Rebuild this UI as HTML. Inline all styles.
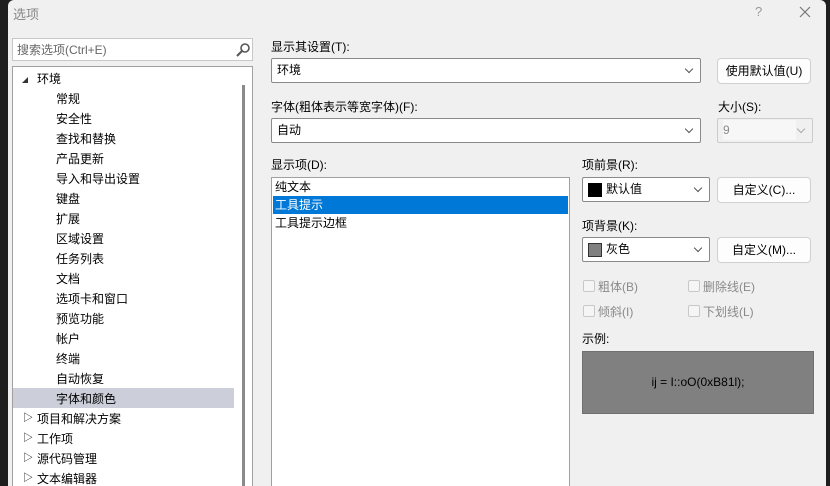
<!DOCTYPE html>
<html style="overflow:hidden;width:830px;height:486px"><head><meta charset="utf-8"><style>
*{box-sizing:border-box;margin:0;padding:0}
body{width:830px;height:486px;overflow:hidden;background:#1e1e1e;font-family:"Liberation Sans","Noto Sans CJK SC",sans-serif;font-size:12px;color:#000;position:relative}
.dlg{position:absolute;left:8px;top:0;width:818px;height:486px;background:#f0f0f0;border-radius:6px 6px 0 0}
.a{position:absolute;white-space:nowrap}
.box{position:absolute;background:#fff;border:1px solid #a0a0a0;overflow:hidden}
.combo{position:absolute;background:#fff;border:1px solid #8a8a8a;border-radius:2px;padding-left:5px;line-height:22px}
.chev{position:absolute;right:8px;top:7px;width:6px;height:6px;border-right:1px solid #555;border-bottom:1px solid #555;transform:rotate(45deg)}
.btn{position:absolute;background:#fdfdfd;border:1px solid #d0d0d0;border-radius:4px;text-align:center;line-height:24px}
.row{position:absolute;left:0;height:20px;line-height:20px}
.cb{position:absolute;width:12px;height:12px;border:1px solid #c8c8c8;border-radius:2px;background:#f5f5f5}
.dis{color:#8a8a8a}
</style></head><body>
<div class="dlg"></div>
<div class="a" style="left:13px;top:4px;color:#888;font-size:13px">选项</div>
<div class="a" style="left:755px;top:4px;color:#999;font-size:13px">?</div>
<svg class="a" style="left:799px;top:6px" width="12" height="12"><path d="M1 1L11 11M11 1L1 11" stroke="#777" stroke-width="1.2"/></svg>

<div class="box" style="left:12px;top:38px;width:241px;height:23px;border-color:#c8c8c8"><span class="a" style="left:4px;top:2px;color:#666">搜索选项(Ctrl+E)</span>
<svg class="a" style="left:223px;top:4px" width="14" height="14"><circle cx="9" cy="5" r="4" fill="none" stroke="#555" stroke-width="1.6"/><line x1="6" y1="8" x2="1" y2="13" stroke="#555" stroke-width="2"/></svg></div>

<div class="box" style="left:12px;top:66px;width:241px;height:430px;border-color:#a0a0a0">
<div class="a" style="left:229px;top:18px;width:3px;height:402px;background:#8a8a8a"></div>
<div class="row" style="top:321px;width:221px;background:#ccced9"></div>
<div class="a" style="left:9px;top:10px;width:0;height:0;border-left:6px solid transparent;border-bottom:6px solid #333"></div>
<div class="row" style="left:24px;top:2px">环境</div>
<div class="row" style="left:43px;top:22px">常规</div>
<div class="row" style="left:43px;top:42px">安全性</div>
<div class="row" style="left:43px;top:62px">查找和替换</div>
<div class="row" style="left:43px;top:82px">产品更新</div>
<div class="row" style="left:43px;top:102px">导入和导出设置</div>
<div class="row" style="left:43px;top:122px">键盘</div>
<div class="row" style="left:43px;top:142px">扩展</div>
<div class="row" style="left:43px;top:162px">区域设置</div>
<div class="row" style="left:43px;top:182px">任务列表</div>
<div class="row" style="left:43px;top:202px">文档</div>
<div class="row" style="left:43px;top:222px">选项卡和窗口</div>
<div class="row" style="left:43px;top:242px">预览功能</div>
<div class="row" style="left:43px;top:262px">帐户</div>
<div class="row" style="left:43px;top:282px">终端</div>
<div class="row" style="left:43px;top:302px">自动恢复</div>
<div class="row" style="left:43px;top:322px">字体和颜色</div>
<div class="row" style="left:10px;top:342px;font-size:10px">▷</div><div class="row" style="left:24px;top:342px">项目和解决方案</div>
<div class="row" style="left:10px;top:362px;font-size:10px">▷</div><div class="row" style="left:24px;top:362px">工作项</div>
<div class="row" style="left:10px;top:382px;font-size:10px">▷</div><div class="row" style="left:24px;top:382px">源代码管理</div>
<div class="row" style="left:10px;top:402px;font-size:10px">▷</div><div class="row" style="left:24px;top:402px">文本编辑器</div>
</div>

<div class="a" style="left:271px;top:38px">显示其设置(T):</div>
<div class="combo" style="left:271px;top:58px;width:430px;height:25px">环境<i class="chev"></i></div>
<div class="btn" style="left:717px;top:58px;width:94px;height:26px">使用默认值(U)</div>

<div class="a" style="left:271px;top:98px">字体(粗体表示等宽字体)(F):</div>
<div class="combo" style="left:271px;top:118px;width:430px;height:25px">自动<i class="chev"></i></div>
<div class="a" style="left:718px;top:98px">大小(S):</div>
<div class="combo dis" style="left:717px;top:118px;width:96px;height:25px;border-color:#ccc;background:#f0f0f0"><span style="display:block;width:73px;background:#f7f7f7;height:20px;margin-top:1px;line-height:20px">9</span><i class="chev" style="border-color:#aaa"></i></div>

<div class="a" style="left:271px;top:156px">显示项(D):</div>
<div class="box" style="left:271px;top:177px;width:299px;height:320px;border-color:#a0a0a0">
<div class="row" style="left:3px;top:0;height:18px;line-height:18px">纯文本</div>
<div class="row" style="left:1px;top:18px;width:295px;height:18px;line-height:18px;background:#0078d7;color:#fff;padding-left:2px">工具提示</div>
<div class="row" style="left:3px;top:36px;height:18px;line-height:18px">工具提示边框</div>
</div>

<div class="a" style="left:582px;top:156px">项前景(R):</div>
<div class="combo" style="left:582px;top:177px;width:128px;height:25px;padding-left:23px">默认值<i class="a" style="left:5px;top:5px;width:14px;height:14px;background:#000"></i><i class="chev"></i></div>
<div class="btn" style="left:717px;top:177px;width:94px;height:26px">自定义(C)...</div>

<div class="a" style="left:582px;top:217px">项背景(K):</div>
<div class="combo" style="left:582px;top:237px;width:128px;height:25px;padding-left:23px">灰色<i class="a" style="left:5px;top:5px;width:14px;height:14px;background:#808080;border:1px solid #333"></i><i class="chev"></i></div>
<div class="btn" style="left:717px;top:237px;width:94px;height:26px">自定义(M)...</div>

<div class="cb" style="left:583px;top:280px"></div><div class="a dis" style="left:598px;top:278px">粗体(B)</div>
<div class="cb" style="left:688px;top:280px"></div><div class="a dis" style="left:703px;top:278px">删除线(E)</div>
<div class="cb" style="left:583px;top:305px"></div><div class="a dis" style="left:598px;top:303px">倾斜(I)</div>
<div class="cb" style="left:688px;top:305px"></div><div class="a dis" style="left:703px;top:303px">下划线(L)</div>

<div class="a" style="left:582px;top:330px">示例:</div>
<div class="a" style="left:582px;top:351px;width:232px;height:63px;background:#808080;border:1px solid #707070;text-align:center;line-height:61px">ij = I::oO(0xB81l);</div>
</body></html>
